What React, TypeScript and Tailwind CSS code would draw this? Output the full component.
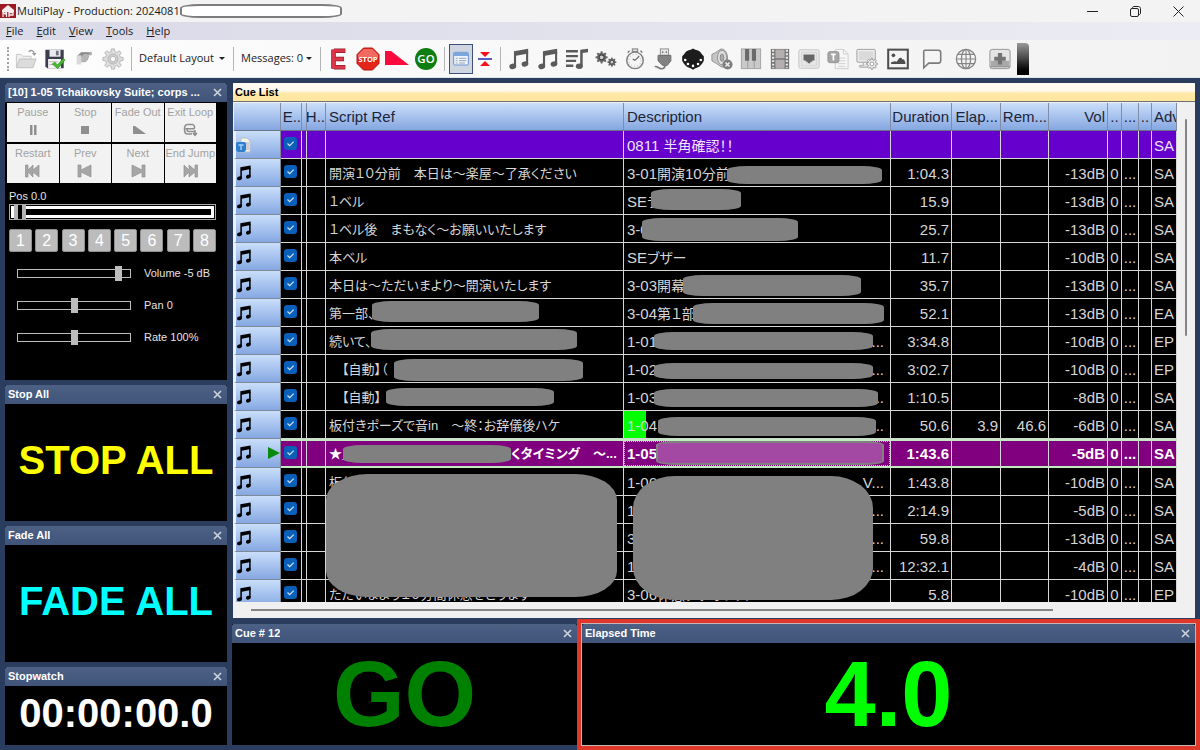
import { useState } from "react"
import type { ReactNode } from "react"

type Cue = {
    script?: ReactNode
    desc: string
    tail?: string
    dur?: string
    elapsed?: string
    remain?: string
    vol?: string
    adv: string
    scriptMask?: string
    descMask?: string
    kind?: "note" | "current" | "playing"
}

const cues: Cue[] = [
    { desc: "0811 半角確認！！", adv: "SA", kind: "note" },
    { script: "開演１０分前　本日は～楽屋～了承ください", desc: "3-01開演10分前", dur: "1:04.3", vol: "-13dB", adv: "SA", descMask: "left-[103px] top-[7px] w-[155px] h-[18px]" },
    { script: "１ベル", desc: "SEラ", dur: "15.9", vol: "-13dB", adv: "SA", descMask: "left-[27px] top-[2px] w-[90px] h-[21px]" },
    { script: "１ベル後　まもなく～お願いいたします", desc: "3-0", dur: "25.7", vol: "-13dB", adv: "SA", descMask: "left-[18px] top-[3px] w-[156px] h-[23px]" },
    { script: "本ベル", desc: "SEブザー", dur: "11.7", vol: "-10dB", adv: "SA" },
    { script: "本日は～ただいまより～開演いたします", desc: "3-03開幕", dur: "35.7", vol: "-13dB", adv: "SA", descMask: "left-[59px] top-[4px] w-[178px] h-[21px]" },
    { script: "第一部、", desc: "3-04第１部", tail: ".", dur: "52.1", vol: "-13dB", adv: "EA", scriptMask: "left-[46px] top-[2px] w-[167px] h-[21px]", descMask: "left-[69px] top-[4px] w-[191px] h-[21px]" },
    { script: "続いて、", desc: "1-01", tail: "A...", dur: "3:34.8", vol: "-10dB", adv: "EP", scriptMask: "left-[45px] top-[2px] w-[206px] h-[21px]", descMask: "left-[30px] top-[5px] w-[219px] h-[18px]" },
    { script: "　【自動】（", desc: "1-02", tail: "...", dur: "3:02.7", vol: "-10dB", adv: "EP", scriptMask: "left-[68px] top-[4px] w-[189px] h-[22px]", descMask: "left-[30px] top-[8px] w-[219px] h-[16px]" },
    { script: "　【自動】", desc: "1-03", tail: "...", dur: "1:10.5", vol: "-8dB", adv: "SA", scriptMask: "left-[60px] top-[5px] w-[168px] h-[18px]", descMask: "left-[30px] top-[6px] w-[224px] h-[18px]" },
    { script: "板付きポーズで音in　～終：お辞儀後ハケ", desc: "1-04", tail: "...", dur: "50.6", elapsed: "3.9", remain: "46.6", vol: "-6dB", adv: "SA", kind: "playing", descMask: "left-[34px] top-[6px] w-[218px] h-[19px]" },
    {
        script: (
            <span className="flex">
                <span className="w-[182px]">★_</span>
                くタイミング　～...
            </span>
        ),
        desc: "1-05", tail: "..", dur: "1:43.6", vol: "-5dB", adv: "SA", kind: "current",
        scriptMask: "left-[17px] top-[4px] w-[168px] h-[18px]",
        descMask: "left-[32px] top-0 w-[228px] h-[24px] border-2 border-[#808080] !bg-[#a349a4]",
    },
    { script: "板付き", desc: "1-06", tail: "V...", dur: "1:43.8", vol: "-10dB", adv: "SA" },
    { desc: "1-07", tail: "...", dur: "2:14.9", vol: "-5dB", adv: "SA" },
    { desc: "3-05", tail: "...", dur: "59.8", vol: "-13dB", adv: "SA" },
    { desc: "1-08", tail: "...", dur: "12:32.1", vol: "-4dB", adv: "SA" },
    { script: "ただいまより１０分間休憩をとります", desc: "3-06休憩アナウンス", dur: "5.8", vol: "-10dB", adv: "EP" },
]

/* ---------- icons ---------- */

const Svg = ({ children, size = "size-[22px]", box = "0 0 24 24" }: { children: ReactNode; size?: string; box?: string }) => (
    <svg viewBox={box} className={`${size} shrink-0`} fill="none" aria-hidden="true">{children}</svg>
)

const OpenIcon = () => (
    <Svg>
        <path d="M1.500 21V7h5l2 2h9v3" fill="#f0f0f0" stroke="#c4c4c4" />
        <path d="M1.500 21.500L5 12h18l-3.500 9.500z" fill="#dcdcdc" stroke="#bdbdbd" />
        <path d="M15 4c3-2.500 5-1 6 2" stroke="#9a9a9a" strokeWidth="1.500" />
        <path d="M18.500 5.500h5L21 8.800z" fill="#9a9a9a" />
    </Svg>
)

const SaveIcon = () => (
    <Svg>
        <path d="M1.500 2h20v20h-18l-2-2z" fill="#3c3d4c" />
        <rect x="6" y="2" width="12" height="7.500" fill="#e9e9ee" />
        <rect x="13" y="3" width="3" height="5" fill="#74747f" />
        <rect x="4.500" y="12" width="14" height="10" fill="#f4f4f6" />
        <path d="M6 15h9M6 18h6" stroke="#b0b0b0" />
        <path d="M9 17.500l3-2 2.500 3 6.500-7 2 1.500-8 9.500z" fill="#4cb82f" stroke="#2b8a1a" strokeWidth=".7" />
    </Svg>
)

const HandIcon = () => (
    <Svg>
        <path d="M5 8.500L9 5h9l2-.5v3h-4l1 1v2l-1 .5v2l-1.500.5-.5 1.500H8l-3-2z" fill="#b5b5b5" stroke="#999" strokeWidth=".7" />
        <path d="M5 8.500L9 5h9v1.500h-6l-3 3z" fill="#8c8c8c" />
        <rect x="4" y="8" width="5" height="10" fill="#d9d9d9" />
    </Svg>
)

const cog = "M10.400 1h3.200l.5 3 2.100.9L18.700 3 21 5.300 19.100 7.800l.9 2.100 3 .5v3.200l-3 .5-.9 2.100 1.900 2.500-2.300 2.300-2.500-1.900-2.100.9-.5 3h-3.200l-.5-3-2.100-.9L5.300 21 3 18.700l1.900-2.500-.9-2.100-3-.5v-3.200l3-.5.9-2.100L3 5.300 5.300 3l2.500 1.900L9.900 4z"

const GearIcon = () => (
    <Svg>
        <path d={cog} fill="#dedede" stroke="#b4b4b4" />
        <circle cx="12" cy="12" r="5.500" fill="#cfcfcf" stroke="#b4b4b4" />
        <circle cx="12" cy="12" r="3" fill="#fafafa" stroke="#b4b4b4" />
    </Svg>
)

const EIcon = () => (
    <Svg>
        <path d="M6.500 3h12.500M6.500 12h11M6.500 21h12.500M6 1.500v21" stroke="#8e1f2e" strokeWidth="5" />
        <path d="M6.500 3h12M6.500 12h10.500M6.500 21h12M6 2v20" stroke="#dd3548" strokeWidth="3.400" />
    </Svg>
)

const StopIcon = () => (
    <Svg size="size-6">
        <path d="M7.500 1h9L23 7.500v9L16.500 23h-9L1 16.500v-9z" fill="#e3251c" stroke="#b31712" />
        <path d="M7.700 2h8.600L22 7.700V11H2V7.700z" fill="#f06a60" />
        <text x="12" y="15" textAnchor="middle" fontSize="7.500" fontWeight="700" fontFamily="Open Sans" fill="#fff">STOP</text>
    </Svg>
)

const FadeIcon = () => (
    <Svg size="w-[26px] h-6" box="0 0 26 24">
        <path d="M1 4h6l18 14H1z" fill="#fb0a3c" />
    </Svg>
)

const GoIcon = () => (
    <Svg>
        <circle cx="12" cy="12" r="12" fill="#0f7d12" />
        <text x="12" y="16.500" textAnchor="middle" fontSize="12.500" fontWeight="600" fontFamily="Open Sans" fill="#fff">GO</text>
    </Svg>
)

const ListIcon = () => (
    <Svg size="size-4">
        <rect x="1" y="2" width="22" height="19" rx="1.500" fill="#eef4fc" stroke="#6c93cc" strokeWidth="1.500" />
        <rect x="1.500" y="2.500" width="21" height="5" fill="#7ba7e0" />
        <path d="M4 11h3M4 14.500h3M4 18h3M9 11h11M9 14.500h11M9 18h9" stroke="#9aa5b5" strokeWidth="1.500" />
    </Svg>
)

const SplitIcon = () => (
    <Svg size="size-4" box="0 0 16 16">
        <path d="M3 1h10L8 6z M3 15h10L8 10z" fill="#f5101a" />
        <path d="M1 8h14" stroke="#1c2cac" strokeWidth="1.500" />
    </Svg>
)

const NoteIcon = ({ size = "size-[22px]", color = "#5a5a5a" }: { size?: string; color?: string }) => (
    <Svg size={size}>
        <path d="M6.500 3.500L22 .8V6L8.800 8.500V20H6.500z" fill={color} />
        <path d="M19.700 4H22v13.500h-2.300z" fill={color} />
        <ellipse cx="5.200" cy="20" rx="3.800" ry="2.900" transform="rotate(-15 5.200 20)" fill={color} />
        <ellipse cx="18.500" cy="17.500" rx="3.700" ry="2.800" transform="rotate(-15 18.500 17.500)" fill={color} />
    </Svg>
)

const PlaylistIcon = () => (
    <Svg>
        <path d="M0 3.500h13M0 8.800h13M0 14h11M0 19.300h8" stroke="#5a5a5a" strokeWidth="2.600" />
        <path d="M15.500 2L24 .8v3.700l-5.800 1V20h-2.700z" fill="#5a5a5a" />
        <ellipse cx="14.500" cy="20" rx="3.800" ry="3" fill="#5a5a5a" />
    </Svg>
)

const GearsIcon = () => (
    <Svg>
        <g transform="translate(0 3) scale(.6)">
            <path d={cog} fill="#666" />
            <circle cx="12" cy="12" r="4.500" fill="#ccc" stroke="#444" strokeWidth="2" />
        </g>
        <g transform="translate(13 10) scale(.45)">
            <path d={cog} fill="#666" />
            <circle cx="12" cy="12" r="4.500" fill="#ccc" stroke="#444" strokeWidth="2" />
        </g>
    </Svg>
)

const WatchIcon = () => (
    <Svg>
        <rect x="9" y="1" width="6" height="3" fill="#ddd" stroke="#777" />
        <circle cx="12" cy="13.500" r="9" fill="#f5f5f5" stroke="#808080" strokeWidth="1.600" />
        <circle cx="12" cy="13.500" r="6.500" stroke="#aaa" strokeDasharray="1 2.400" />
        <path d="M12 13.500l4.500-4.500M12 13.500L9.500 12M4 5l2-2M20 5l-2-2" stroke="#666" strokeWidth="1.300" />
    </Svg>
)

const UsbIcon = () => (
    <Svg>
        <rect x="8" y="1" width="9" height="7" fill="#e8e8e8" stroke="#888" />
        <path d="M10.500 3.500v2M14.500 3.500v2" stroke="#777" strokeWidth="1.500" />
        <path d="M5.500 8h14v6l-4 5h-5l-5-5z" fill="#828282" stroke="#6a6a6a" />
        <path d="M13 19c0 4-4 4-6 3s-4-2.500-5-1.500" stroke="#777" strokeWidth="1.800" />
    </Svg>
)

const DinIcon = () => (
    <Svg>
        <path d="M12 .5l2.500 1.500c3 .3 5.500 2 7 4.500L23.800 9v5l-1.800 3c-1.500 2.500-4 4.500-7.500 5L12 23.800 9.500 22C6 21.500 3.500 19.500 2 17L.2 14V9l2.300-2.500C4 4 6.500 2.300 9.500 2z" fill="#1c1c1c" />
        <circle cx="3.500" cy="13" r="1.400" fill="#fff" />
        <circle cx="6.500" cy="17.500" r="1.400" fill="#fff" />
        <circle cx="12" cy="19.500" r="1.400" fill="#fff" />
        <circle cx="17.500" cy="17.500" r="1.400" fill="#fff" />
        <circle cx="20.500" cy="13" r="1.400" fill="#fff" />
    </Svg>
)

const SpeakerIcon = () => (
    <Svg>
        <path d="M1 7l4-2 6-4c4 0 7 4 7 10s-3 10-6 10l-6-4-5-3z" fill="#c6c6c6" stroke="#8c8c8c" />
        <ellipse cx="12" cy="10.500" rx="5" ry="8" fill="#ddd" stroke="#909090" />
        <ellipse cx="12" cy="10.500" rx="2" ry="4" fill="#aaa" stroke="#888" />
        <circle cx="18" cy="18" r="5.500" fill="#7d7d7d" />
        <path d="M15.800 15.800l4.400 4.400M20.200 15.800l-4.400 4.400" stroke="#eee" strokeWidth="1.600" />
    </Svg>
)

const PianoIcon = () => (
    <Svg>
        <rect x="1.500" y="1" width="21" height="21.500" fill="#c9c9c9" stroke="#a2a2a2" />
        <path d="M8.500 1v21M15.500 1v21" stroke="#999" />
        <path d="M5.500 1h4.500v13H5.500zM13 1h4.500v13H13z" fill="#6a6a6a" />
    </Svg>
)

const FilmIcon = () => (
    <Svg>
        <rect x="2" y="1" width="20" height="22" fill="#777" />
        <path d="M7 1.500h10v9.800H7zM7 12.700h10v9.800H7z" fill="#b4aeae" />
        <path d="M4.500 2v20M19.500 2v20" stroke="#e8e8e8" strokeWidth="2.400" strokeDasharray="2 1.800" />
    </Svg>
)

const NetworkIcon = () => (
    <Svg>
        <rect x="1" y="2" width="22" height="20" rx="1.500" fill="#f0f0f0" stroke="#bdbdbd" />
        <rect x="3.500" y="4.500" width="17" height="15" fill="#e6e6e6" stroke="#d0d0d0" />
        <path d="M6 7h12v6.500h-2.500V15h-2v1.500h-3V15h-2v-1.500H6z" fill="#666" />
    </Svg>
)

const TextIcon = () => (
    <Svg>
        <path d="M9 1.500h9l5 5v16H9z" fill="#f6f6f6" stroke="#cacaca" />
        <path d="M18 1.500v5h5M12 11h8M12 14h8M12 17h8M12 20h8" stroke="#cecece" />
        <rect x="1" y="4" width="12" height="12" rx="2" fill="#a6a6a6" stroke="#929292" />
        <path d="M4.500 7h5M7 7v6.500" stroke="#fff" strokeWidth="1.800" />
    </Svg>
)

const MonitorIcon = () => (
    <Svg>
        <rect x="1" y="1.500" width="20" height="14" rx="1" fill="#ededed" stroke="#999" />
        <rect x="3" y="3.500" width="16" height="10" fill="#dadada" />
        <path d="M8 16v3H4v2h9" fill="#ddd" stroke="#aaa" />
        <g transform="translate(11 11) scale(.53)">
            <path d={cog} fill="#eee" stroke="#888" strokeWidth="1.600" />
            <circle cx="12" cy="12" r="4" fill="#fff" stroke="#888" strokeWidth="1.600" />
        </g>
    </Svg>
)

const ImageIcon = () => (
    <Svg>
        <rect x="1.300" y="1.800" width="21.400" height="20.400" fill="#f4f4f4" stroke="#4e4e4e" strokeWidth="2.200" />
        <circle cx="7" cy="8" r="2" fill="#4e4e4e" />
        <path d="M4.500 17.500v-2l4-1 2 .5 3-4 2-.5 1.500 2h1.500l1.500 3v2z" fill="#4e4e4e" />
    </Svg>
)

const SpeechIcon = () => (
    <Svg>
        <path d="M4 2.500h15c1.500 0 2.500 1 2.500 2.500v9c0 1.500-1 2.500-2.500 2.500H8.500L3 21.500V4c0-1 .5-1.500 1-1.500z" stroke="#7b7b7b" strokeWidth="1.700" />
    </Svg>
)

const GlobeIcon = () => (
    <Svg>
        <circle cx="12" cy="12" r="10.500" stroke="#858585" strokeWidth="1.400" />
        <ellipse cx="12" cy="12" rx="5" ry="10.500" stroke="#858585" strokeWidth="1.400" />
        <path d="M12 1.500v21M1.500 12h21M3 7h18M3 17h18" stroke="#858585" strokeWidth="1.200" />
    </Svg>
)

const AddIcon = () => (
    <Svg>
        <rect x="1" y="1.500" width="22" height="21" rx="2.500" fill="#e4e4e4" stroke="#8f8f8f" />
        <rect x="2" y="14" width="20" height="6" fill="#a9a9a9" />
        <path d="M1.500 20.500h21" stroke="#777" />
        <path d="M9.700 5.500h4.600V9.500h4v4.500h-4v4H9.700v-4h-4V9.500h4z" fill="#737373" />
    </Svg>
)

const PageIcon = () => (
    <Svg size="size-4" box="0 0 16 16">
        <path d="M5 1h6l3 3v11H5z" fill="#f2f2ea" stroke="#b9c0c4" />
        <path d="M10 6h3M10 8h3M10 10h3M10 12h3" stroke="#aab" />
        <path d="M0 6.500c0-1 1-1.500 2-1.500h5.500c1.500 0 2.500.5 2.500 1.500v6c0 1-1 2.500-2.500 2.500H2.500C1 15 0 13.700 0 12.500z" fill="#2f7fd0" />
        <path d="M2.500 8h5M5 8v5" stroke="#a9d1f7" strokeWidth="1.400" />
    </Svg>
)

const CloseX = () => (
    <Svg size="size-[9px]" box="0 0 9 9">
        <path d="M1 1l7 7M8 1L1 8" stroke="#ced4dd" strokeWidth="1.600" />
    </Svg>
)

/* ---------- toolbar ---------- */

const ToolButton = ({ label, width = "w-[29px]", children }: { label: string; width?: string; children: ReactNode }) => (
    <button aria-label={label} className={`${width} h-full flex shrink-0 items-center justify-center`}>{children}</button>
)

const Separator = () => (
    <span className="w-2 flex shrink-0 justify-center"><span className="w-px h-6 bg-[#b5b5b5]" /></span>
)

const MenuButton = ({ width, children }: { width: string; children: ReactNode }) => (
    <button className={`${width} h-full flex shrink-0 items-center justify-between px-1 whitespace-nowrap`}>
        {children}
        <span className="border-x-[3px] border-t-[3px] border-x-transparent border-t-[#222]" />
    </button>
)

const cueTools: [string, () => ReactNode][] = [
    ["Audio cue", NoteIcon], ["Audio cue 2", NoteIcon], ["Playlist", PlaylistIcon], ["Control cue", GearsIcon],
    ["Wait cue", WatchIcon], ["Serial", UsbIcon], ["MIDI", DinIcon], ["Mute", SpeakerIcon], ["Keyboard", PianoIcon],
    ["Video", FilmIcon], ["Network", NetworkIcon], ["Note", TextIcon], ["Display", MonitorIcon],
]

const extraTools: [string, () => ReactNode][] = [
    ["Image", ImageIcon], ["Comment", SpeechIcon], ["Web", GlobeIcon], ["Add", AddIcon],
]

function Toolbar() {
    return (
        <div className="h-[38px] flex shrink-0 items-center pl-[7px] bg-linear-to-r from-[#fdfdfd] to-[#f2f2f2] border-b border-[#dfe3ec] overflow-hidden">
            <span className="w-1 shrink-0 h-6 border-l-2 border-dotted border-[#a0a0a0]" />
            <ToolButton label="Open"><OpenIcon /></ToolButton>
            <ToolButton label="Save"><SaveIcon /></ToolButton>
            <ToolButton label="Properties"><HandIcon /></ToolButton>
            <ToolButton label="Settings"><GearIcon /></ToolButton>
            <Separator />
            <MenuButton width="w-[94px]">Default Layout</MenuButton>
            <Separator />
            <MenuButton width="w-[79px]">Messages: 0</MenuButton>
            <Separator />
            <ToolButton label="Edit mode"><EIcon /></ToolButton>
            <ToolButton label="Stop all"><StopIcon /></ToolButton>
            <ToolButton label="Fade all"><FadeIcon /></ToolButton>
            <ToolButton label="Go"><GoIcon /></ToolButton>
            <Separator />
            <button aria-label="Cue list" aria-pressed="true" className="w-6 h-[30px] mx-px flex shrink-0 items-center justify-center border border-[#3c5078] bg-[#cfd6e2]">
                <ListIcon />
            </button>
            <ToolButton label="Split" width="w-[22px]"><SplitIcon /></ToolButton>
            <Separator />
            {cueTools.map(([label, Icon]) => (
                <ToolButton key={label} label={label}><Icon /></ToolButton>
            ))}
            {extraTools.map(([label, Icon]) => (
                <ToolButton key={label} label={label} width="w-[34px]"><Icon /></ToolButton>
            ))}
            <span className="w-3 h-8 shrink-0 rounded-tr-sm bg-linear-to-b from-[#9a9a9a] via-[#444] to-black" />
        </div>
    )
}

/* ---------- panels ---------- */

function Panel({ title, className, children }: { title: string; className?: string; children: ReactNode }) {
    return (
        <section className={`flex flex-col bg-black ${className ?? ""}`}>
            <header className="h-[19px] flex shrink-0 items-center justify-between pl-[3px] pr-[5px] rounded-t-xs bg-linear-to-b from-[#4d6185] to-[#40547a] text-white text-[11px] font-bold">
                <h2 className="truncate">{title}</h2>
                <button aria-label={`Close ${title}`}><CloseX /></button>
            </header>
            {children}
        </section>
    )
}

const transport: { label: string; icon: ReactNode }[] = [
    { label: "Pause", icon: <path d="M5 3h2.500v10H5zM9 3h2.500v10H9z" fill="#8f8f8f" /> },
    { label: "Stop", icon: <path d="M4 4h8v8H4z" fill="#8f8f8f" /> },
    { label: "Fade Out", icon: <path d="M3 4h2l11 8H3z" fill="#8f8f8f" /> },
    {
        label: "Exit Loop",
        icon: <path d="M3.500 6.800h8c1.500 0 1.500-4-1-4.300H5.500C1.500 2.500 1.500 12 5.500 12H10M6 6.500c-1.500 1-1 3 .5 3H13M13 8v5M11 11l2 2.200 2-2.200" stroke="#8f8f8f" strokeWidth="1.600" />,
    },
    { label: "Restart", icon: <path d="M.5 2H3v5l5-5v5l6-5v12L8 9v5L3 9v5H.5z" fill="#a6a6a6" stroke="#8f8f8f" strokeWidth=".7" /> },
    { label: "Prev", icon: <path d="M1 2h3v5l10-5v12L4 9v5H1z" fill="#a6a6a6" stroke="#8f8f8f" strokeWidth=".7" /> },
    { label: "Next", icon: <path d="M2 2l10 5V2h3v12h-3V9L2 14z" fill="#a6a6a6" stroke="#8f8f8f" strokeWidth=".7" /> },
    { label: "End Jump", icon: <path d="M2 2l5 5V2l6 5V2h2.500v12H13V9l-6 5V9l-5 5z" fill="#a6a6a6" stroke="#8f8f8f" strokeWidth=".7" /> },
]

const sliders = [
    { id: "volume", label: "Volume -5 dB", value: 92 },
    { id: "pan", label: "Pan 0", value: 50 },
    { id: "rate", label: "Rate 100%", value: 50 },
]

function PlayerPanel() {
    return (
        <Panel title="[10] 1-05 Tchaikovsky Suite; corps ..." className="shrink-0">
            <div className="h-[278px] pt-px pl-[2px] pr-[11px] text-[11px] text-[#e4e4e4]">
                <div className="grid grid-cols-4 gap-x-px gap-y-[2px]">
                    {transport.map((b) => (
                        <button key={b.label} className="h-[39px] flex flex-col items-center gap-[2px] pt-px bg-[#f2f2f2] text-[#a2a2a2] leading-4 whitespace-nowrap">
                            {b.label}
                            <Svg size="size-4" box="0 0 16 16">{b.icon}</Svg>
                        </button>
                    ))}
                </div>
                <div className="pl-[2px] pt-[5px]">
                    <label htmlFor="pos" className="block leading-4">Pos 0.0</label>
                    <div className="h-4 flex items-center border border-[#aaa] p-px">
                        <input
                            id="pos"
                            type="range"
                            defaultValue={0}
                            className="w-full h-3 appearance-none bg-black border-[3px] border-white [&::-webkit-slider-thumb]:appearance-none [&::-webkit-slider-thumb]:w-3 [&::-webkit-slider-thumb]:h-3.5 [&::-webkit-slider-thumb]:bg-black [&::-webkit-slider-thumb]:border-x-4 [&::-webkit-slider-thumb]:border-[#b4b4b4]"
                        />
                    </div>
                    <div className="flex justify-between pt-[9px]">
                        {[1, 2, 3, 4, 5, 6, 7, 8].map((n) => (
                            <button key={n} className="size-[23px] rounded-xs border border-[#8f8f8f] bg-[#bcbcbc] text-white text-base leading-5">{n}</button>
                        ))}
                    </div>
                    <div className="flex flex-col gap-4 pt-[13px] pl-2">
                        {sliders.map((s) => (
                            <div key={s.id} className="h-4 flex items-center gap-[13px]">
                                <input
                                    id={s.id}
                                    type="range"
                                    defaultValue={s.value}
                                    className="w-[114px] h-[9px] appearance-none bg-black border border-[#bdbdbd] [&::-webkit-slider-thumb]:appearance-none [&::-webkit-slider-thumb]:w-[7px] [&::-webkit-slider-thumb]:h-[15px] [&::-webkit-slider-thumb]:bg-[#bdbdbd]"
                                />
                                <label htmlFor={s.id} className="whitespace-nowrap">{s.label}</label>
                            </div>
                        ))}
                    </div>
                </div>
            </div>
        </Panel>
    )
}

/* ---------- cue list ---------- */

// kana and kanji run a size smaller than the latin text beside them
const Mixed = ({ text }: { text: string }) => (
    <>
        {text.split(/([\u3000-\uffef]+)/).map((part, i) => (
            <span key={i} className={i % 2 ? "text-sm leading-5" : ""}>{part}</span>
        ))}
    </>
)

const Mask = ({ className }: { className: string }) => (
    <span className={`absolute z-10 rounded-[20px/4px] bg-[#808080] ${className}`} />
)

function CueRow({ cue, index }: { cue: Cue; index: number }) {
    const [enabled, setEnabled] = useState(true)
    const current = cue.kind === "current"
    const fill = current
        ? "h-[29px] bg-[#800080] text-white font-bold"
        : cue.kind === "note"
            ? "h-7 bg-[#6600cc] text-[#f0e4ff]"
            : "h-7 bg-black text-[#d6d6d6]"
    const edge = current ? "border-y-2 border-y-[#c0ecc0]" : "border-b border-b-[#d6d6d6]"
    const cell = `border-r border-r-[#d6d6d6] overflow-hidden whitespace-nowrap ${edge} ${fill}`
    const text = `${cell} ${current ? "pt-px" : "pt-[3px]"} pb-0`
    const num = `${text} pl-0 pr-[2px] text-right`

    return (
        <tr>
            <th scope="row" className="h-7 p-0 border-b border-r border-l-2 border-l-[#e9f1fc] border-[#7e8896] bg-linear-to-b from-[#c9defa] to-[#86a8e2]">
                <span className="flex items-center justify-between">
                    {cue.kind === "note" ? <PageIcon /> : <NoteIcon size="size-4" color="#000" />}
                    {current && (
                        <Svg size="size-3" box="0 0 12 12"><path d="M0 0l12 6-12 6z" fill="#0a8a0a" /></Svg>
                    )}
                </span>
            </th>
            <td className={`${cell} p-0`}>
                <label className="relative block size-[13px] ml-[3px] -mt-[2px]">
                    <input
                        type="checkbox"
                        aria-label={`Enable cue ${index + 1}`}
                        checked={enabled}
                        onChange={(e) => setEnabled(e.target.checked)}
                        className="block size-[13px] appearance-none rounded-[3px] bg-[#0a60b8]"
                    />
                    {enabled && (
                        <svg viewBox="0 0 13 13" className="absolute inset-0 pointer-events-none" fill="none">
                            <path d="M3.500 6.500l2.200 2.200 4-4" stroke="#cfe4fa" strokeWidth="1.200" />
                        </svg>
                    )}
                </label>
            </td>
            <td className={`${cell} p-0`} />
            <td className={`${cell} p-0`} />
            <td className={`${cell} p-0`}>
                <div className={`relative h-full flex items-center pl-[3px] text-[13px] leading-5 ${current ? "pt-px" : "pt-[3px]"}`}>
                    {cue.script}
                    {cue.scriptMask && <Mask className={cue.scriptMask} />}
                </div>
            </td>
            <td className={`${cell} p-0`}>
                <div className={`relative h-full flex items-center justify-between pl-[3px] pr-[6px] ${current ? "pt-px outline-1 -outline-offset-1 outline-dotted outline-[#d9a8d9]" : "pt-[3px]"}`}>
                    {cue.kind === "playing" && <span className="absolute left-0 inset-y-0 w-[22px] bg-[#00ff00]" />}
                    <span className="relative"><Mixed text={cue.desc} /></span>
                    <span>{cue.tail}</span>
                    {cue.descMask && <Mask className={cue.descMask} />}
                </div>
            </td>
            <td className={num}>{cue.dur}</td>
            <td className={num}>{cue.elapsed}</td>
            <td className={num}>{cue.remain}</td>
            <td className={num}>{cue.vol}</td>
            <td className={`${text} px-0 text-center`}>{cue.vol && "0"}</td>
            <td className={`${text} px-0 text-center`}>{cue.vol && "..."}</td>
            <td className={`${cell} p-0`} />
            <td className={`${text} pl-[2px] pr-0`}>{cue.adv}</td>
        </tr>
    )
}

const columns = [
    { title: "", col: "w-[47px]", align: "" },
    { title: "E..", col: "w-[21px]", align: "justify-end" },
    { title: "", col: "w-[5px]", align: "" },
    { title: "H..", col: "w-[19px]", align: "justify-end" },
    { title: "Script Ref", col: "w-[298px]", align: "pl-[3px]" },
    { title: "Description", col: "", align: "pl-[3px]" },
    { title: "Duration", col: "w-[61px]", align: "pr-[2px] justify-end" },
    { title: "Elap...", col: "w-[49px]", align: "pr-[2px] justify-end" },
    { title: "Rem...", col: "w-[48px]", align: "pr-px justify-end" },
    { title: "Vol", col: "w-[59px]", align: "pr-[2px] justify-end" },
    { title: "..", col: "w-[14px]", align: "justify-center" },
    { title: "...", col: "w-[17px]", align: "justify-center" },
    { title: "..", col: "w-[13px]", align: "justify-center" },
    { title: "Adv", col: "w-[25px]", align: "pl-[2px]" },
]

function CueList() {
    return (
        <section className="flex-1 min-h-0 flex flex-col ml-px bg-[#f0f0f0]">
            <header className="h-[19px] flex shrink-0 items-center pl-[2px] rounded-t-xs bg-linear-to-b from-[#fffaf0] from-40% to-[#ffe7a2] to-60% text-black text-[11px] font-bold border-b border-[#6c6f74]">
                <h2>Cue List</h2>
            </header>
            <div className="flex-1 min-h-0 flex pl-px pt-px">
                <div className="relative flex-1 min-w-0 overflow-hidden bg-black">
                    <table className="w-full table-fixed border-separate border-spacing-0 text-[15px] leading-5">
                        <colgroup>
                            {columns.map((c, i) => <col key={i} className={c.col} />)}
                        </colgroup>
                        <thead>
                            <tr>
                                {columns.map((c, i) => (
                                    <th
                                        key={i}
                                        scope="col"
                                        className="h-7 p-0 font-normal overflow-hidden whitespace-nowrap text-[#1c2438] border-b border-b-[#6a7486] border-r border-r-[#7f8da6] bg-linear-to-b from-[#cbdffa] to-[#85a6e0]"
                                    >
                                        <div className={`flex ${c.align}`}>{c.title}</div>
                                    </th>
                                ))}
                            </tr>
                        </thead>
                        <tbody>
                            {cues.map((cue, i) => <CueRow key={i} cue={cue} index={i} />)}
                        </tbody>
                    </table>
                    <div className="absolute z-10 left-[92px] top-[371px] w-[291px] h-[123px] rounded-[42px/26px] bg-[#808080]" />
                    <div className="absolute z-10 left-[399px] top-[373px] w-[240px] h-[124px] rounded-[42px/32px] bg-[#808080]" />
                </div>
                <div className="w-[18px] shrink-0 flex justify-center pt-4">
                    <div className="w-[2px] h-[45%] rounded-full bg-[#858585]" />
                </div>
            </div>
            <div className="h-4 shrink-0 flex items-center pl-[18px]">
                <div className="w-[85%] h-[2px] bg-[#858585]" />
            </div>
        </section>
    )
}

/* ---------- window ---------- */

const menus = ["File", "Edit", "View", "Tools", "Help"]

function TitleBar() {
    return (
        <div className="h-[22px] shrink-0 flex items-center bg-[#f3f3f3]">
            <Svg size="size-4" box="0 0 16 16">
                <path d="M0 1h16v14H0z" fill="#9c1a22" />
                <path d="M8 2l6 5v2H2V7z" fill="#f7eded" />
                <path d="M3 14V9l2 2 1.500-2v5M9 14V9.500h4v2.500H9" stroke="#f7eded" strokeWidth="1.300" />
            </Svg>
            <h1 className="ml-px text-[11px] leading-4 whitespace-nowrap">MultiPlay - Production: 2024081</h1>
            <span className="w-[162px] h-[14px] rounded-[20px/4px] border-2 border-[#7d7d7d] bg-white" />
            <div className="ml-auto flex items-center">
                <button aria-label="Minimize" className="w-[43px] flex justify-center">
                    <Svg size="size-[11px]" box="0 0 11 11"><path d="M0 5.500h11" stroke="#222" /></Svg>
                </button>
                <button aria-label="Restore" className="w-[43px] flex justify-center">
                    <Svg size="size-[11px]" box="0 0 11 11">
                        <rect x=".5" y="2.500" width="8" height="8" rx="1.500" stroke="#222" />
                        <path d="M2.500 2.500V2c0-1 .5-1.500 1.500-1.500h4.500c1 0 2 1 2 2V7c0 1-.5 1.500-1.500 1.500" stroke="#222" />
                    </Svg>
                </button>
                <button aria-label="Close" className="w-[43px] flex justify-center">
                    <Svg size="size-[11px]" box="0 0 11 11"><path d="M.5.5l10 10M10.500.5l-10 10" stroke="#222" /></Svg>
                </button>
            </div>
        </div>
    )
}

export default function App() {
    return (
        <div className="h-screen flex flex-col overflow-hidden bg-[#2b3d5e] font-['Liberation_Sans','Noto_Sans_CJK_JP',sans-serif] [font-feature-settings:'palt']">
            <div className="shrink-0 text-[11px] text-[#1a1a1a] font-['Open_Sans',sans-serif]">
                <TitleBar />
                <nav className="h-[18px] flex items-center gap-[13px] pl-[6px] bg-linear-to-r from-[#d9d9e8] to-[#ececf3]">
                    {menus.map((m) => (
                        <button key={m} className="leading-4"><span className="underline">{m[0]}</span>{m.slice(1)}</button>
                    ))}
                </nav>
                <Toolbar />
            </div>

            <main className="flex-1 min-h-0 flex gap-[5px] p-[5px]">
                <aside className="w-[222px] shrink-0 flex flex-col gap-[5px]">
                    <PlayerPanel />
                    <Panel title="Stop All" className="flex-1">
                        <button className="flex-1 pb-[5px] text-[40px] leading-10 font-bold text-[#ffff00] whitespace-nowrap">STOP ALL</button>
                    </Panel>
                    <Panel title="Fade All" className="flex-1">
                        <button className="flex-1 pb-[5px] text-[40px] leading-10 font-bold text-[#00ffff] whitespace-nowrap">FADE ALL</button>
                    </Panel>
                    <Panel title="Stopwatch" className="shrink-0">
                        <div className="h-[59px] pb-[5px] flex items-center justify-center text-[40px] leading-10 font-bold text-white">00:00:00.0</div>
                    </Panel>
                </aside>

                <div className="flex-1 min-w-0 flex flex-col gap-[6px]">
                    <CueList />
                    <div className="shrink-0 flex gap-[5px]">
                        <Panel title="Cue # 12" className="w-[345px] shrink-0">
                            <button className="h-[102px] text-[92px] leading-none font-bold text-[#008000]">GO</button>
                        </Panel>
                        <div className="relative flex-1 flex flex-col">
                            <Panel title="Elapsed Time" className="flex-1">
                                <div className="h-[102px] flex items-center justify-center text-[92px] leading-none font-bold text-[#00ff00]">4.0</div>
                            </Panel>
                            <div className="absolute -inset-[5px] border-4 border-[#e0372b] pointer-events-none">
                                <div className="h-full border border-[#c9b4b8]" />
                            </div>
                        </div>
                    </div>
                </div>
            </main>
        </div>
    )
}
